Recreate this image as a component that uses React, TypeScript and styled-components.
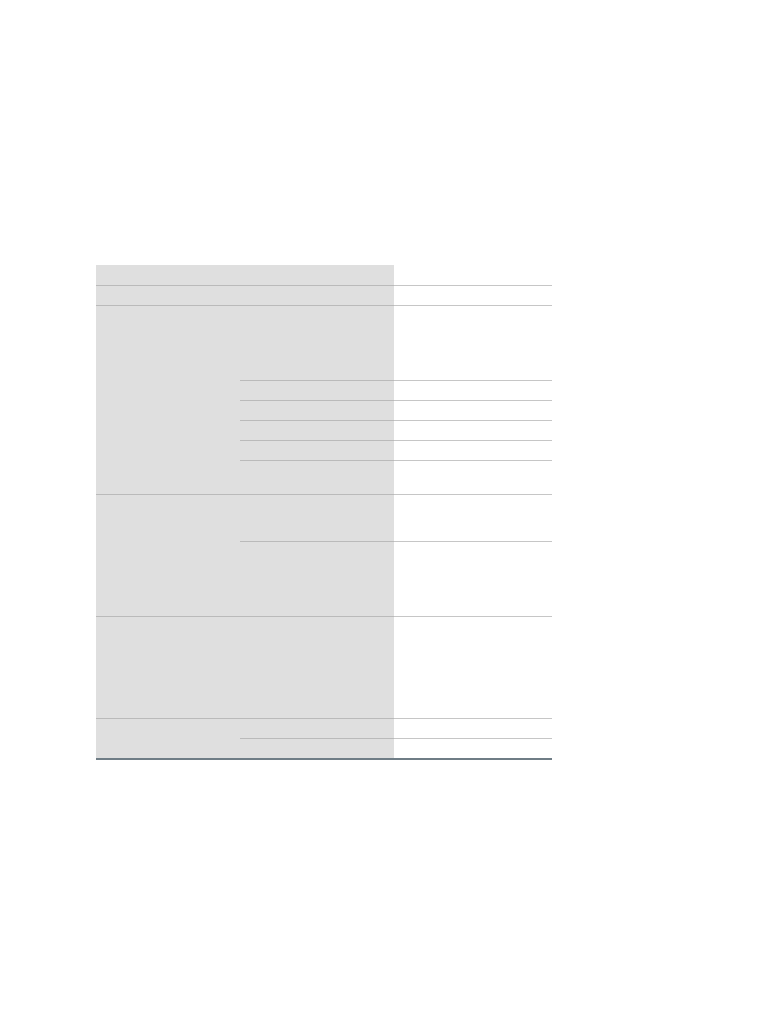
import React from 'react'
import styled, { createGlobalStyle } from 'styled-components'

const Global = createGlobalStyle`
  html, body {
    margin: 0;
    padding: 0;
    background: #ffffff;
    font-family: "Liberation Sans", Arial, sans-serif;
  }
`

const Page = styled.div`
  width: 768px;
  min-height: 1024px;
  padding: 265px 0 0 96px;
  box-sizing: border-box;
`

const Grid = styled.table`
  border-collapse: separate;
  border-spacing: 0;
  table-layout: fixed;
  width: 456px;
  font-size: 12px;
  color: #333;
`

const Col = styled.col<{ $w: number }>`
  width: ${(p) => p.$w}px;
`

const Row = styled.tr<{ $h: number }>`
  height: ${(p) => p.$h + 1}px;
`

const Cell = styled.td<{ $shade?: boolean; $end?: boolean }>`
  padding: 0;
  vertical-align: top;
  background: ${(p) => (p.$shade ? '#dfdfdf' : 'transparent')};
  border-bottom: ${(p) => (p.$end ? 2 : 1)}px solid
    ${(p) => (p.$end ? '#6f7d86' : p.$shade ? '#bababa' : '#c6c6c6')};
`

type Group = { sub: number[] }

// heights of the sub rows in each block, col 1 spans the block
const groups: Group[] = [
  { sub: [74, 19, 19, 19, 19, 33] },
  { sub: [46, 74] },
  { sub: [101] },
  { sub: [19, 20] },
]

const App: React.FC = () => {
  return (
    <Page>
      <Global />
      <Grid>
        <colgroup>
          <Col $w={144} />
          <Col $w={154} />
          <Col $w={158} />
        </colgroup>
        <thead>
          <Row $h={20}>
            <Cell $shade colSpan={2} />
            <Cell />
          </Row>
        </thead>
        <tbody>
          <Row $h={19}>
            <Cell $shade />
            <Cell $shade />
            <Cell />
          </Row>
          {groups.map((g, gi) => {
            const last = gi === groups.length - 1
            return g.sub.map((h, si) => {
              const end = last && si === g.sub.length - 1
              return (
                <Row key={`${gi}-${si}`} $h={h}>
                  {si === 0 && <Cell $shade rowSpan={g.sub.length} $end={last} />}
                  <Cell $shade $end={end} />
                  <Cell $end={end} />
                </Row>
              )
            })
          })}
        </tbody>
      </Grid>
    </Page>
  )
}

export default App
